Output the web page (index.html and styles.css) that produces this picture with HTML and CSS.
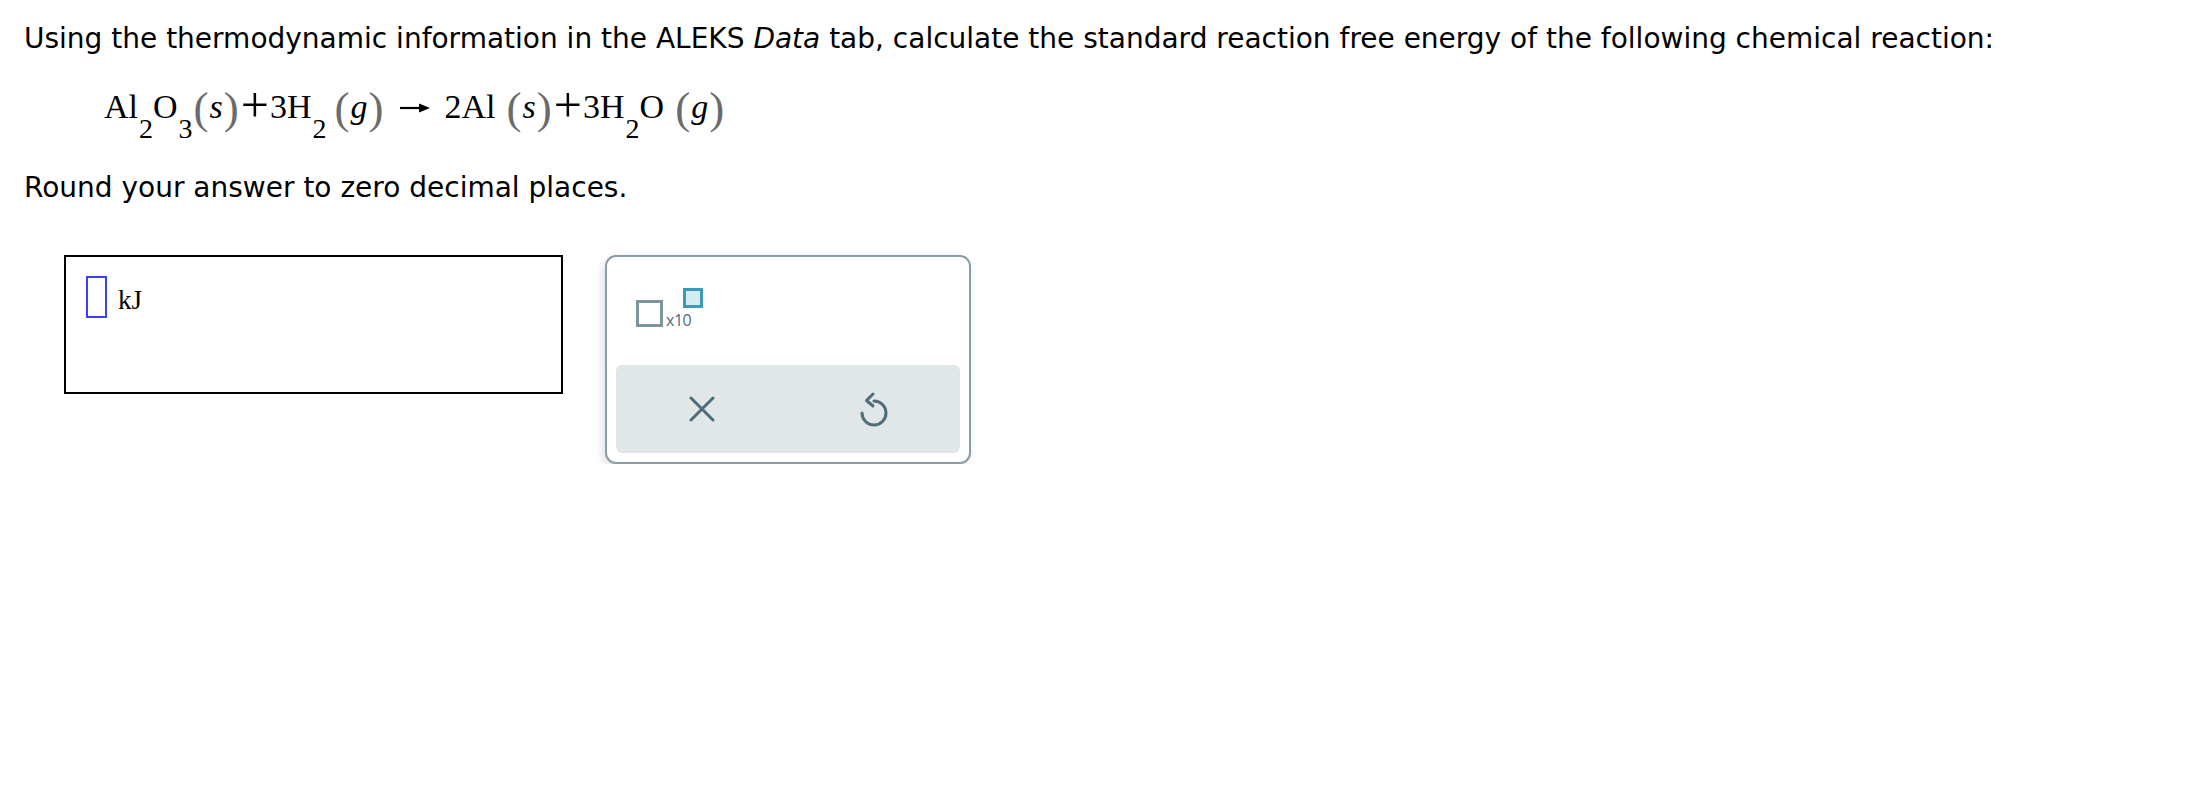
FILE: index.html
```html
<!DOCTYPE html>
<html lang="en">
<head>
    <meta charset="UTF-8">
    <title>ALEKS question</title>
    <link rel="stylesheet" href="styles.css">
</head>
<body>
    <div id="question">
        <p class="text">Using the thermodynamic information in the ALEKS <i>Data</i> tab, calculate the standard reaction free energy of the following chemical reaction:</p>

        <!-- kept on one line so no spaces sneak in between the pieces -->
        <div class="eq"><span>Al</span><span class="sub">2</span><span>O</span><span class="sub">3</span><span class="par">(</span><i>s</i><span class="par">)</span><span class="op">+</span><span>3H</span><span class="sub">2</span><span class="par gap">(</span><i>g</i><span class="par">)</span><svg class="arrow" width="32" height="12" viewBox="0 0 32 12"><line x1="1" y1="6" x2="22" y2="6" stroke="#000" stroke-width="2.2" /><polygon points="20,1.5 31,6 20,10.5" fill="#000" /></svg><span>2Al</span><span class="par wide">(</span><i>s</i><span class="par">)</span><span class="op">+</span><span>3H</span><span class="sub">2</span><span>O</span><span class="par wide">(</span><i>g</i><span class="par">)</span></div>

        <p class="text">Round your answer to zero decimal places.</p>
    </div>

    <div id="answer-row">
        <div class="answer-box">
            <span class="cursor-box"></span>
            <span class="unit">kJ</span>
        </div>

        <div class="keypad">
            <div class="keypad-top">
                <div class="sci">
                    <span class="sci-box"></span>
                    <span class="sci-x">x10</span>
                    <span class="sci-exp"></span>
                </div>
            </div>
            <div class="keypad-bar">
                <button class="key" title="Clear">
                    <svg width="26" height="26" viewBox="0 0 26 26">
                        <path d="M2 2 L24 24 M24 2 L2 24" stroke="#4e6d7a" stroke-width="3" stroke-linecap="round" fill="none" />
                    </svg>
                </button>
                <button class="key" title="Undo">
                    <svg width="32" height="40" viewBox="0 0 32 40">
                        <path d="M4 24 A12 12 0 1 0 16 12" stroke="#4e6d7a" stroke-width="3" stroke-linecap="round" fill="none" />
                        <path d="M15 5 L8.5 11.5 L15 17" stroke="#4e6d7a" stroke-width="3" stroke-linecap="round" stroke-linejoin="round" fill="none" />
                    </svg>
                </button>
            </div>
        </div>
    </div>
</body>
</html>
```

FILE: styles.css
```css
body {
    margin: 0;
    padding: 22px 0 0 0;
    background-color: #fff;
    color: #000;
    font-family: 'DejaVu Sans', 'Verdana', sans-serif;
}

#question {
    padding-left: 24px;
}

.text {
    margin: 0;
    font-size: 28px;
    line-height: 34px;
}

.eq {
    margin-top: 31px;
    height: 84px;
    padding-left: 80px;
    font-family: 'Liberation Serif', 'Times New Roman', serif;
    font-size: 34px;
    line-height: 40px;
    white-space: nowrap;
}

.eq i {
    font-style: italic;
}

.sub {
    font-size: 28px;
    line-height: 0;
    vertical-align: -20px;
    margin-left: 1px;
}

.par {
    font-size: 45px;
    line-height: 0;
    color: #6b6b6b;
    vertical-align: -5px;
    margin: 0 1px;
}

.par.gap {
    margin-left: 8px;
}

.par.wide {
    margin-left: 11px;
}

.op {
    font-size: 50px;
    line-height: 0;
    vertical-align: -4px;
    margin: 0 1px;
}

.arrow {
    margin: 0 14px 0 14px;
    vertical-align: 4px;
}

#answer-row {
    display: flex;
    align-items: flex-start;
    margin-top: 50px;
    padding-left: 64px;
}

.answer-box {
    box-sizing: border-box;
    width: 499px;
    height: 139px;
    border: 2px solid #000;
    padding: 19px 20px;
    display: flex;
    align-items: flex-start;
    gap: 11px;
}

.cursor-box {
    box-sizing: border-box;
    width: 21px;
    height: 42px;
    border: 2px solid #3c3cff;
}

.unit {
    font-family: 'Liberation Serif', 'Times New Roman', serif;
    font-size: 27px;
    line-height: 27px;
    margin-top: 11px;
}

.keypad {
    box-sizing: border-box;
    width: 366px;
    height: 209px;
    margin-left: 42px;
    border: 2px solid #8a9ea7;
    border-radius: 11px;
    padding: 9px;
    background-color: #fff;
    box-shadow: -2px 4px 10px rgba(0, 0, 0, 0.13);
    display: flex;
    flex-direction: column;
}

.keypad-top {
    height: 99px;
    padding: 22px 0 0 20px;
    box-sizing: border-box;
}

.sci {
    display: flex;
    align-items: flex-start;
    font-family: 'Open Sans', 'Liberation Sans', sans-serif;
    color: #4e6d7a;
}

.sci-box {
    box-sizing: border-box;
    width: 27px;
    height: 27px;
    margin-top: 12px;
    border: 3px solid #7f959d;
}

.sci-x {
    font-size: 16px;
    line-height: 16px;
    margin: 24px 0 0 3px;
    letter-spacing: -0.5px;
}

.sci-exp {
    box-sizing: border-box;
    width: 20px;
    height: 20px;
    margin-left: -8px;
    border: 3px solid #3d9ab4;
    background-color: #d4edf3;
}

.keypad-bar {
    flex: 1;
    display: flex;
    background-color: #e1e6e8;
    border-radius: 6px;
}

.key {
    flex: 1;
    display: flex;
    align-items: center;
    justify-content: center;
    background: none;
    border: none;
    padding: 0;
    cursor: pointer;
}
```
